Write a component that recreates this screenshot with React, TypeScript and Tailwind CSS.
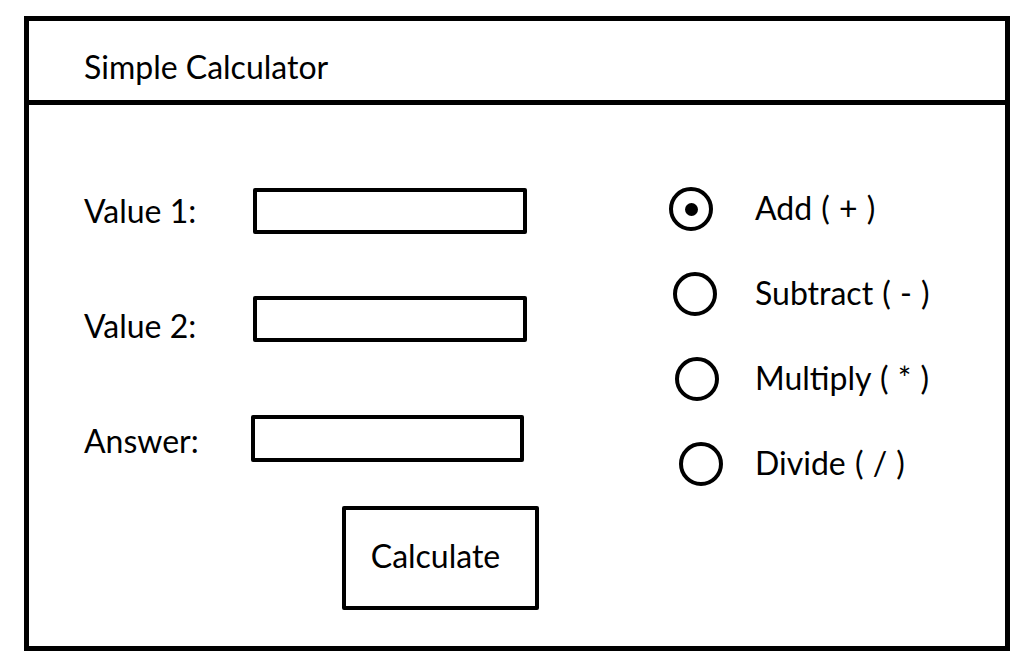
import React, { useState } from "react";

const ops = [
  { id: "add", label: "Add ( + )", shift: "ml-0" },
  { id: "sub", label: "Subtract ( - )", shift: "ml-[4px]" },
  { id: "mul", label: "Multiply ( * )", shift: "ml-[6px]" },
  { id: "div", label: "Divide ( / )", shift: "ml-[10px]" },
];

function Field({ label, labelW, offset }: { label: string; labelW: string; offset: string }) {
  return (
    <div className="flex items-center h-[46px]">
      <span className={`${labelW} ${offset} leading-none`}>{label}</span>
      <div className="w-[274px] h-[46px] border-[4px] border-black rounded-[2px] bg-white" />
    </div>
  );
}

export default function App() {
  const [op, setOp] = useState("add");
  return (
    <div
      className="w-[1024px] h-[669px] bg-white text-black overflow-hidden pt-[16px] pl-[24px]"
      style={{ fontFamily: "Lato, 'Noto Sans', sans-serif" }}
    >
      <div className="w-[986px] h-[635px] border-[5px] border-black flex flex-col">
        <header className="h-[84px] shrink-0 border-b-[5px] border-black flex items-center pl-[55px] text-[32px]">
          <span className="mt-[12px]">Simple Calculator</span>
        </header>
        <main className="flex flex-1 pl-[55px] text-[32px]">
          <div className="w-[585px] flex flex-col">
            <div className="mt-[83px]">
              <Field label="Value 1:" labelW="w-[169px]" offset="mt-[0px]" />
            </div>
            <div className="mt-[62px]">
              <Field label="Value 2:" labelW="w-[169px]" offset="mt-[14px]" />
            </div>
            <div className="mt-[73px]">
              <div className="flex items-center h-[47px]">
                <span className="w-[167px] mt-[4px] leading-none">Answer:</span>
                <div className="w-[273px] h-[47px] border-[4px] border-black rounded-[2px] bg-white" />
              </div>
            </div>
            <button
              type="button"
              className="mt-[44px] ml-[258px] w-[197px] h-[104px] border-[4px] border-black rounded-[2px] bg-white flex items-center justify-center text-[32px] pr-[10px] pb-[4px]"
            >
              Calculate
            </button>
          </div>
          <div className="flex flex-col pt-[82px] gap-[41px]">
            {ops.map((o) => (
              <label key={o.id} className="flex items-center h-[44px] cursor-pointer" onClick={() => setOp(o.id)}>
                <span className="w-[86px] shrink-0 flex">
                  <span
                    className={`${o.shift} w-[44px] h-[44px] rounded-full border-[4px] border-black flex items-center justify-center`}
                  >
                    {op === o.id && <span className="w-[13px] h-[13px] rounded-full bg-black" />}
                  </span>
                </span>
                <span className="leading-none [word-spacing:1px] mb-[2px]">{o.label}</span>
              </label>
            ))}
          </div>
        </main>
      </div>
    </div>
  );
}
